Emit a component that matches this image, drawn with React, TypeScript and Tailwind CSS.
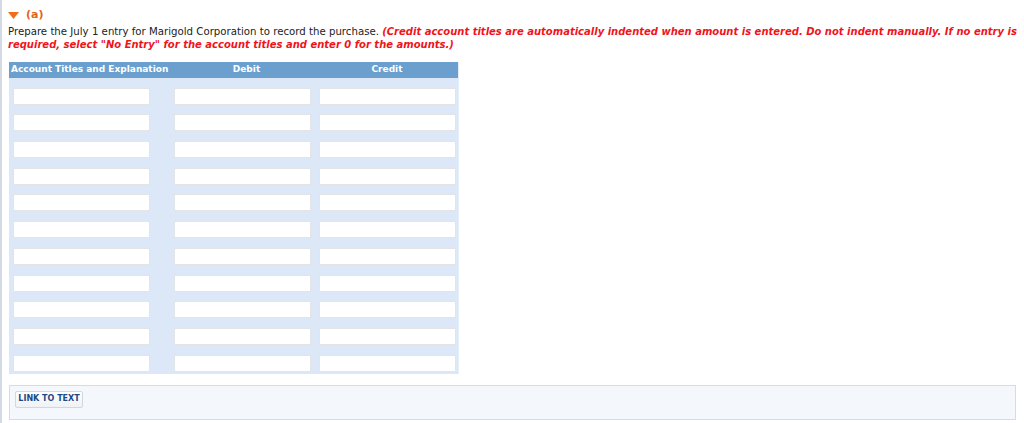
import React from "react";

const rows = Array.from({ length: 11 });

export default function App() {
  return (
    <div
      className="min-h-[423px] w-[1024px] border-l-2 border-[#d4dae4] bg-white pl-[6px] pr-[6px] text-[#222]"
      style={{ fontFamily: '"DejaVu Sans", Verdana, sans-serif' }}
    >
      {/* Part heading */}
      <div className="flex items-center gap-[7px] pt-[8px] text-[11px] font-bold leading-[13px] text-[#e3621b]">
        <svg width="11" height="7" viewBox="0 0 11 7" className="mt-[1px]">
          <polygon points="0,0 11,0 5.5,7" fill="#ee6d1f" />
        </svg>
        <span>(a)</span>
      </div>

      {/* Instructions */}
      <p className="mt-[4px] text-[10.2px] leading-[13px]">
        Prepare the July 1 entry for Marigold Corporation to record the purchase.{" "}
        <span className="text-[10px] font-bold italic text-[#f0141b]">
          (Credit account titles are automatically indented when amount is entered. Do not indent manually. If no entry is
          required, select "No Entry" for the account titles and enter 0 for the amounts.)
        </span>
      </p>

      {/* Journal table */}
      <div className="ml-[1px] mt-[11px] w-[450px] border-r border-[#e6eefa] bg-[#dce8f8] pb-[2px]">
        <div className="grid h-[16px] grid-cols-[161px_145px_144px] items-center whitespace-nowrap bg-[#6a9fce] text-[9px] font-bold text-white">
          <div className="pl-[2px]">Account Titles and Explanation</div>
          <div className="pl-[8px] text-center">Debit</div>
          <div className="text-center">Credit</div>
        </div>
        {rows.map((_, i) => (
          <div key={i} className="grid h-[26.7px] grid-cols-[161px_145px_144px] items-end">
            <div className="pl-[4px]">
              <div className="h-[17px] w-[137px] border border-[#e2e4e8] bg-white" />
            </div>
            <div className="pl-[4px]">
              <div className="h-[17px] w-[137px] border border-[#e2e4e8] bg-white" />
            </div>
            <div className="pl-[4px]">
              <div className="h-[17px] w-[137px] border border-[#e2e4e8] bg-white" />
            </div>
          </div>
        ))}
      </div>

      {/* Link to text */}
      <div className="ml-[1px] mt-[11px] h-[35px] w-[1007px] border border-[#d6dce4] bg-[#f4f8fc] pl-[5px] pt-[5px]">
        <button className="flex h-[17px] w-[68px] items-center justify-center rounded-[2px] border border-[#cfd8e2] bg-gradient-to-b from-white to-[#eef2f6] text-[8px] font-bold text-[#1d4a86]">
          LINK TO TEXT
        </button>
      </div>
    </div>
  );
}
